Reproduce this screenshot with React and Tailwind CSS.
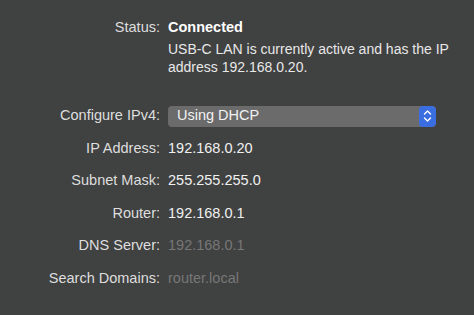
const ROWS = [
  { label: 'IP Address:', value: '192.168.0.20' },
  { label: 'Subnet Mask:', value: '255.255.255.0' },
  { label: 'Router:', value: '192.168.0.1' },
  { label: 'DNS Server:', value: '192.168.0.1', dim: true },
  { label: 'Search Domains:', value: 'router.local', dim: true },
]

function Row({ label, children }) {
  return (
    <div className="flex items-center h-[32.5px]">
      <div className="w-[160px] text-right text-[#dedede]">{label}</div>
      <div className="flex-1 pl-2">{children}</div>
    </div>
  )
}

export default function App() {
  return (
    <div
      className="w-[474px] h-[315px] bg-[#404141] text-[14.5px] overflow-hidden"
      style={{ fontFamily: '"Liberation Sans", Arial, sans-serif' }}
    >
      <div className="pt-[18px]">
        <div className="flex items-center h-5">
          <div className="w-[160px] text-right text-[#dedede]">Status:</div>
          <div className="pl-2 font-bold text-white">Connected</div>
        </div>
        <div className="ml-[168px] mt-[3px] w-[290px] text-[14px] leading-[17.5px] text-[#e8e8e8]">
          USB-C LAN is currently active and has the IP address 192.168.0.20.
        </div>
      </div>

      <div className="mt-[24px]">
        <Row label="Configure IPv4:">
          <div className="flex w-[268px] h-[21px] rounded-[4px] bg-[#6b6b6b] overflow-hidden">
            <div className="flex-1 flex items-center pl-[9px] text-[#f2f2f2]">Using DHCP</div>
            <div className="w-[17px] bg-[#3a6de0] flex items-center justify-center rounded-[4px]">
              <svg width="9" height="14" viewBox="0 0 9 14" fill="none" stroke="white" strokeWidth="1.4" strokeLinecap="round" strokeLinejoin="round">
                <path d="M1.5 5 L4.5 2 L7.5 5" />
                <path d="M1.5 9 L4.5 12 L7.5 9" />
              </svg>
            </div>
          </div>
        </Row>
        {ROWS.map(r => (
          <Row key={r.label} label={r.label}>
            <span className={r.dim ? 'text-[#777777]' : 'text-[#f0f0f0]'}>{r.value}</span>
          </Row>
        ))}
      </div>
    </div>
  )
}
